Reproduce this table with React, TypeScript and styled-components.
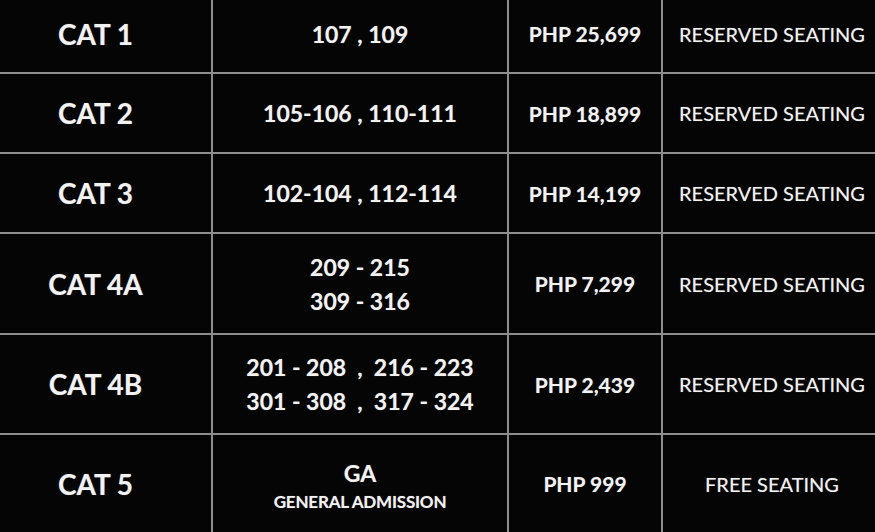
import styled, { createGlobalStyle } from 'styled-components'

const GlobalStyle = createGlobalStyle`
  html, body {
    margin: 0;
    padding: 0;
    background: #050505;
  }
  body {
    font-family: Lato, "Open Sans", sans-serif;
  }
`

type Row = {
  cat: string
  sections: string[]
  note?: string
  price: string
  seating: string
  height: number
}

const rows: Row[] = [
  { cat: 'CAT 1', sections: ['107 , 109'], price: 'PHP 25,699', seating: 'RESERVED SEATING', height: 72 },
  { cat: 'CAT 2', sections: ['105-106 , 110-111'], price: 'PHP 18,899', seating: 'RESERVED SEATING', height: 78 },
  { cat: 'CAT 3', sections: ['102-104 , 112-114'], price: 'PHP 14,199', seating: 'RESERVED SEATING', height: 78 },
  { cat: 'CAT 4A', sections: ['209 - 215', '309 - 316'], price: 'PHP 7,299', seating: 'RESERVED SEATING', height: 99 },
  {
    cat: 'CAT 4B',
    sections: ['201 - 208  ,  216 - 223', '301 - 308  ,  317 - 324'],
    price: 'PHP 2,439',
    seating: 'RESERVED SEATING',
    height: 98,
  },
  { cat: 'CAT 5', sections: ['GA'], note: 'GENERAL ADMISSION', price: 'PHP 999', seating: 'FREE SEATING', height: 97 },
]

export default function App() {
  return (
    <>
      <GlobalStyle />
      <Table style={{ gridTemplateRows: rows.map((r) => `${r.height}px`).join(' ') }}>
        {rows.map((r, i) => (
          <RowGroup key={r.cat}>
            <CatCell $lift={i === 0}>{r.cat}</CatCell>
            <SectionCell $lift={i === 0}>
              {r.sections.map((s) => (
                <SectionLine key={s}>{s}</SectionLine>
              ))}
              {r.note && <Note>{r.note}</Note>}
            </SectionCell>
            <PriceCell $lift={i === 0}>{r.price}</PriceCell>
            <SeatingCell $lift={i === 0}>{r.seating}</SeatingCell>
          </RowGroup>
        ))}
      </Table>
    </>
  )
}

const RowGroup = styled.div`
  display: contents;
`

const Table = styled.div`
  display: grid;
  grid-template-columns: 211px 294px 152px 1fr;
  gap: 2px;
  width: 875px;
  height: 532px;
  background: #8e8e8e;
  color: #f2f2f2;
  text-shadow: 0 0 1px rgba(255, 255, 255, 0.4);
`

const Cell = styled.div<{ $lift?: boolean }>`
  background: #050505;
  display: flex;
  flex-direction: column;
  align-items: center;
  justify-content: center;
  white-space: pre;
  padding-bottom: ${(p) => (p.$lift ? '5px' : '0')};
`

const CatCell = styled(Cell)`
  padding-right: 20px;
  font-size: 28px;
  font-weight: 700;
`

const SectionCell = styled(Cell)`
  font-size: 23px;
  font-weight: 700;
  line-height: 34px;
`

const SectionLine = styled.div``

const Note = styled.div`
  font-size: 17px;
  line-height: 20px;
  margin-top: 2px;
  letter-spacing: -0.2px;
`

const PriceCell = styled(Cell)`
  font-size: 21px;
  font-weight: 700;
`

const SeatingCell = styled(Cell)`
  font-size: 20px;
  font-weight: 400;
  padding-left: 6px;
`
